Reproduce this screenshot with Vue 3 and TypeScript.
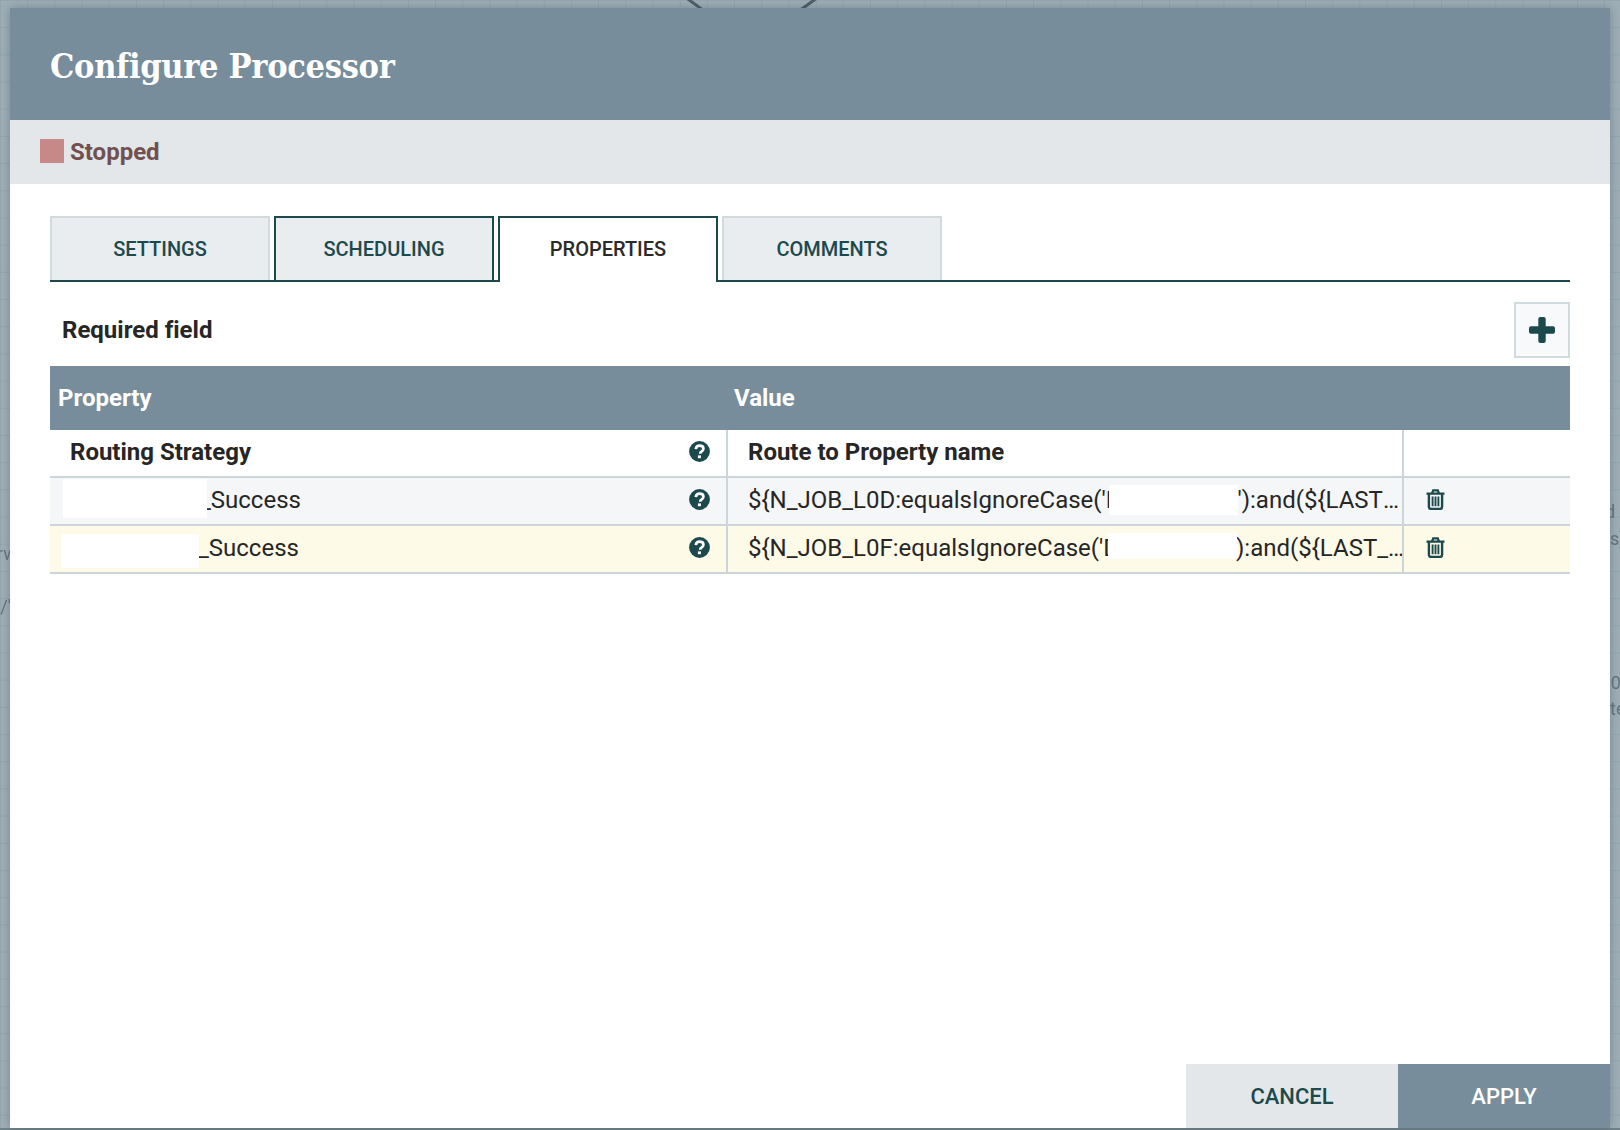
<script setup lang="ts">
interface Mask {
  left: number;
  top: number;
  width: number;
  height: number;
}

interface PropertyRow {
  name: string;
  prefix: string;
  suffix?: string;
  gap?: number;
  nameOffset?: number;
  nameMask?: Mask;
  valueMask?: Mask;
  kind: "plain" | "odd" | "selected";
}

const tabs = [
  { label: "SETTINGS", state: "" },
  { label: "SCHEDULING", state: "hovered" },
  { label: "PROPERTIES", state: "active" },
  { label: "COMMENTS", state: "" },
];

// bits of the flow canvas that stick out behind the dialog
const canvasTexts = [
  { text: "rw", left: -3, top: 543 },
  { text: ":/'", left: -4, top: 596 },
  { text: "d", left: 1605, top: 501 },
  { text: "s}", left: 1610, top: 528 },
  { text: ".0", left: 1606, top: 672 },
  { text: "te", left: 1610, top: 698 },
];

const rows: PropertyRow[] = [
  {
    name: "Routing Strategy",
    prefix: "Route to Property name",
    kind: "plain",
  },
  {
    name: "_Success",
    prefix: "${N_JOB_L0D:equalsIgnoreCase('D",
    suffix: "'):and(${LAST_JOB_STATUS})}",
    gap: 116,
    nameOffset: 150,
    nameMask: { left: 13, top: 1, width: 144, height: 39 },
    valueMask: { left: 381, top: 7, width: 129, height: 30 },
    kind: "odd",
  },
  {
    name: "_Success",
    prefix: "${N_JOB_L0F:equalsIgnoreCase('D",
    suffix: "):and(${LAST_…",
    gap: 117,
    nameOffset: 148,
    nameMask: { left: 11, top: 8, width: 138, height: 34 },
    valueMask: { left: 380, top: 7, width: 129, height: 26 },
    kind: "selected",
  },
];

const boxStyle = (mask: Mask) => ({
  left: mask.left + "px",
  top: mask.top + "px",
  width: mask.width + "px",
  height: mask.height + "px",
});
</script>

<template>
  <div class="page">
    <div class="chevron left"></div>
    <div class="chevron right"></div>
    <span
      v-for="item in canvasTexts"
      :key="item.text"
      class="canvas-text"
      :style="{ left: item.left + 'px', top: item.top + 'px' }"
    >{{ item.text }}</span>

    <div class="dialog">
      <div class="dialog-header">Configure Processor</div>
      <div class="status-bar">
        <span class="status-icon"></span>
        <span class="status-text">Stopped</span>
      </div>

      <div class="dialog-body">
        <div class="tabs">
          <div v-for="tab in tabs" :key="tab.label" class="tab" :class="tab.state">
            {{ tab.label }}
          </div>
        </div>

        <div class="toolbar">
          <span class="required">Required field</span>
          <button class="add-button" type="button" aria-label="Add property">
            <svg width="26" height="26" viewBox="0 0 26 26" fill="#1c4a4c">
              <rect x="9.300" y="0" width="7.400" height="26" rx="2" />
              <rect x="0" y="9.300" width="26" height="7.400" rx="2" />
            </svg>
          </button>
        </div>

        <div class="grid">
          <div class="grid-head">
            <div class="head-name">Property</div>
            <div class="head-value">Value</div>
          </div>
          <div v-for="(row, index) in rows" :key="index" class="grid-row" :class="row.kind">
            <div class="cell name-cell">
              <span
                class="name-text"
                :style="row.nameOffset ? { marginLeft: row.nameOffset - 20 + 'px' } : undefined"
              >{{ row.name }}</span>
              <span v-if="row.nameMask" class="mask" :style="boxStyle(row.nameMask)"></span>
              <svg class="help" width="21" height="21" viewBox="0 0 21 21">
                <circle cx="10.500" cy="10.500" r="10.400" fill="#1c4a4c" />
                <path
                  d="M6.800 8.200c.2-2.200 1.800-3.500 3.800-3.500 2.200 0 3.800 1.300 3.800 3.100 0 1.500-.9 2.200-2 2.900-.8.5-1.200 1-1.200 2"
                  fill="none"
                  stroke="#fff"
                  stroke-width="2.700"
                />
                <rect x="8.900" y="14.400" width="3" height="2.800" fill="#fff" />
              </svg>
            </div>
            <div class="cell value-cell">
              <span class="value-text">{{ row.prefix }}<span
                v-if="row.gap"
                class="value-gap"
                :style="{ width: row.gap + 'px' }"
              ></span>{{ row.suffix }}</span>
              <span v-if="row.valueMask" class="mask" :style="boxStyle(row.valueMask)"></span>
            </div>
            <div class="cell action-cell">
              <svg v-if="row.nameMask" width="19" height="21" viewBox="0 0 19 21">
                <path d="M.5 4.700h18M6 4.500l1.200-3.200h4.600L13 4.500" fill="none" stroke="#1c4a4c" stroke-width="2.200" />
                <path
                  d="M2.900 5v12.800a2.300 2.300 0 0 0 2.300 2.200h8.600a2.300 2.300 0 0 0 2.300-2.200V5"
                  fill="none"
                  stroke="#1c4a4c"
                  stroke-width="2.400"
                />
                <path d="M6.600 7.500v9.800M9.500 7.500v9.800M12.400 7.500v9.800" fill="none" stroke="#1c4a4c" stroke-width="1.900" />
              </svg>
            </div>
          </div>
        </div>
      </div>

      <div class="dialog-footer">
        <button class="footer-button cancel" type="button">CANCEL</button>
        <button class="footer-button apply" type="button">APPLY</button>
      </div>
    </div>
  </div>
</template>

<style>
html,
body {
  margin: 0;
  background: #9fafb8;
}
</style>

<style scoped>
.page {
  position: relative;
  box-sizing: border-box;
  width: 1620px;
  height: 1130px;
  padding: 8px 10px 2px;
  overflow: hidden;
  font-family: Roboto, "Liberation Sans", sans-serif;
  background-color: #9fafb8;
  background-image: linear-gradient(rgba(120, 140, 150, 0.25) 1px, transparent 1px),
    linear-gradient(90deg, rgba(120, 140, 150, 0.25) 1px, transparent 1px);
  background-size: 27.2px 27.2px;
}

.page::after {
  content: "";
  position: absolute;
  left: 0;
  right: 0;
  bottom: 0;
  height: 2px;
  background: #72838c;
}

.chevron {
  position: absolute;
  top: -8px;
  width: 2.500px;
  height: 24px;
  background: #4f5f68;
}

.chevron.left {
  left: 693px;
  transform: rotate(-54deg);
}

.chevron.right {
  left: 807px;
  transform: rotate(54deg);
}

.canvas-text {
  position: absolute;
  font-size: 18px;
  color: #667580;
  filter: blur(0.6px);
}

.dialog {
  position: relative;
  z-index: 1;
  display: flex;
  flex-direction: column;
  height: 1120px;
  background: #fff;
  box-shadow: 0 0 10px rgba(40, 60, 70, 0.35);
}

.dialog-header {
  box-sizing: border-box;
  height: 112px;
  padding: 3px 40px 0;
  display: flex;
  align-items: center;
  background: #778d9b;
  color: #fff;
  font-family: "DejaVu Serif Condensed", "DejaVu Serif", "Liberation Serif", serif;
  font-size: 34px;
  font-weight: 700;
  letter-spacing: -0.3px;
}

.status-bar {
  height: 64px;
  padding-left: 30px;
  display: flex;
  align-items: center;
  gap: 6px;
  background: #e3e7ea;
}

.status-icon {
  width: 24px;
  height: 24px;
  margin-top: -2px;
  background: #c78888;
}

.status-text {
  font-size: 24px;
  font-weight: 700;
  color: #725050;
}

.dialog-body {
  padding: 32px 40px 0;
}

.tabs {
  display: flex;
  gap: 4px;
  height: 66px;
  box-sizing: border-box;
  border-bottom: 2px solid #1c4a4c;
}

.tab {
  box-sizing: border-box;
  width: 220px;
  height: 64px;
  display: flex;
  align-items: center;
  justify-content: center;
  border: 2px solid #cfdbdc;
  border-bottom: 0;
  background: #e9edf0;
  color: #1c4a4c;
  font-size: 20px;
  font-weight: 500;
}

.tab.hovered {
  border-color: #1c4a4c;
}

.tab.active {
  position: relative;
  border-color: #1c4a4c;
  background: #fff;
  color: #2a2a2a;
  height: 66px;
  padding-bottom: 2px;
}

.toolbar {
  box-sizing: border-box;
  height: 84px;
  padding: 12px 0 0 12px;
  display: flex;
  align-items: center;
  justify-content: space-between;
}

.required {
  font-size: 24px;
  font-weight: 700;
  color: #262626;
  font-variant-ligatures: none;
}

.add-button {
  box-sizing: border-box;
  width: 56px;
  height: 56px;
  padding: 0;
  display: flex;
  align-items: center;
  justify-content: center;
  border: 2px solid #cfdbdc;
  background: #f7f9fa;
}

.grid-head {
  display: flex;
  height: 64px;
  background: #778d9b;
  color: #fff;
  font-size: 24px;
  font-weight: 700;
  align-items: center;
}

.head-name {
  width: 676px;
  padding-left: 8px;
}

.grid-row {
  display: flex;
  height: 48px;
  box-sizing: border-box;
  border-bottom: 2px solid #cbd5da;
  color: #262626;
  font-size: 24px;
}

.grid-row.plain {
  font-weight: 700;
}

.grid-row.odd {
  background: #f4f6f8;
}

.grid-row.selected {
  background: #fefae8;
}

.cell {
  position: relative;
  box-sizing: border-box;
  display: flex;
  align-items: center;
  padding-bottom: 3px;
  white-space: pre;
  overflow: hidden;
}

.name-cell {
  width: 678px;
  padding-left: 20px;
  padding-right: 16px;
  justify-content: space-between;
  border-right: 2px solid #cbd5da;
}

.value-cell {
  width: 676px;
  padding-left: 20px;
  border-right: 2px solid #cbd5da;
}

.value-text {
  display: block;
  width: 100%;
  overflow: hidden;
  text-overflow: ellipsis;
}

.selected .value-text {
  text-overflow: clip;
}

.value-gap {
  display: inline-block;
}

.action-cell {
  flex: 1;
  padding-left: 22px;
}

.mask {
  position: absolute;
  background: #fff;
}

.dialog-footer {
  margin-top: auto;
  display: flex;
  justify-content: flex-end;
}

.footer-button {
  width: 212px;
  height: 64px;
  border: 0;
  padding: 0;
  font-family: inherit;
  font-size: 22px;
  font-weight: 500;
}

.cancel {
  background: #e3e7ea;
  color: #1c4a4c;
}

.apply {
  background: #778d9b;
  color: #fff;
}
</style>
